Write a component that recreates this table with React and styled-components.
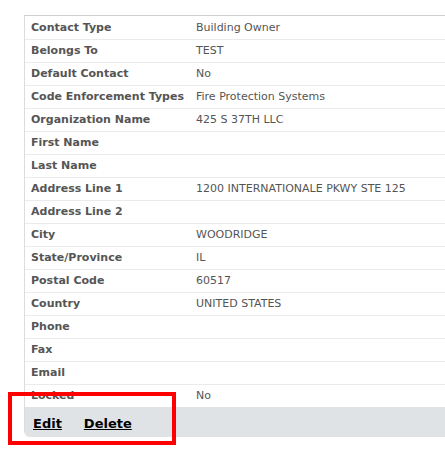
import styled, { createGlobalStyle } from "styled-components";

const GlobalStyle = createGlobalStyle`
  html, body {
    margin: 0;
    padding: 0;
    background: #fff;
    overflow: hidden;
  }
  body {
    font-family: Verdana, "DejaVu Sans", sans-serif;
  }
`;

const Page = styled.div`
  position: relative;
  width: 445px;
  height: 450px;
  padding: 15px 0 0 24px;
  box-sizing: border-box;
`;

const Panel = styled.div`
  width: 440px;
  border-top: 1px solid #cfcfcf;
  border-left: 1px solid #dcdcdc;
  border-bottom-left-radius: 6px;
  overflow: hidden;
`;

const Table = styled.table`
  width: 100%;
  border-collapse: collapse;
`;

const Row = styled.tr`
  height: 23px;
  border-bottom: 1px solid #ebebeb;
  &:last-child {
    border-bottom: none;
  }
`;

const Label = styled.td`
  width: 158px;
  padding: 0 0 0 6px;
  font-size: 11px;
  font-weight: bold;
  color: #555;
  white-space: nowrap;
`;

const Value = styled.td`
  padding: 0 0 0 7px;
  font-size: 11px;
  color: #555;
  white-space: nowrap;
`;

const Footer = styled.div`
  height: 30px;
  background: #e0e3e6;
  display: flex;
  align-items: center;
  gap: 22px;
  padding: 2px 0 0 8px;
  box-sizing: border-box;
`;

const Action = styled.a`
  font-size: 13px;
  font-weight: bold;
  color: #000;
  text-decoration: underline;
  cursor: pointer;
`;

const Highlight = styled.div`
  position: absolute;
  left: 8px;
  top: 392px;
  width: 168px;
  height: 53px;
  border: 4px solid #f00;
  box-sizing: border-box;
  pointer-events: none;
`;

const rows = [
  ["Contact Type", "Building Owner"],
  ["Belongs To", "TEST"],
  ["Default Contact", "No"],
  ["Code Enforcement Types", "Fire Protection Systems"],
  ["Organization Name", "425 S 37TH LLC"],
  ["First Name", ""],
  ["Last Name", ""],
  ["Address Line 1", "1200 INTERNATIONALE PKWY STE 125"],
  ["Address Line 2", ""],
  ["City", "WOODRIDGE"],
  ["State/Province", "IL"],
  ["Postal Code", "60517"],
  ["Country", "UNITED STATES"],
  ["Phone", ""],
  ["Fax", ""],
  ["Email", ""],
  ["Locked", "No"],
];

export default function App() {
  return (
    <>
      <GlobalStyle />
      <Page>
        <Panel>
          <Table>
            <tbody>
              {rows.map(([label, value]) => (
                <Row key={label}>
                  <Label>{label}</Label>
                  <Value>{value}</Value>
                </Row>
              ))}
            </tbody>
          </Table>
          <Footer>
            <Action>Edit</Action>
            <Action>Delete</Action>
          </Footer>
        </Panel>
        <Highlight />
      </Page>
    </>
  );
}
